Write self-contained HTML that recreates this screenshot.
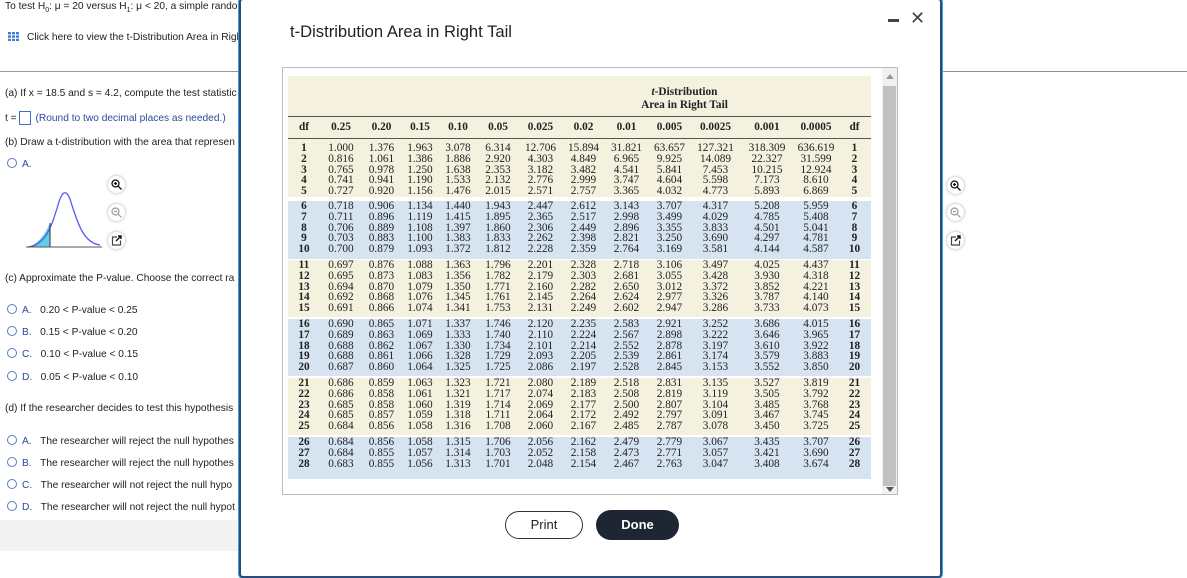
<!DOCTYPE html>
<html><head><meta charset="utf-8"><style>
*{margin:0;padding:0;box-sizing:border-box}
body{width:1187px;height:551px;overflow:hidden;background:#fff;font-family:"Liberation Sans",Arial,sans-serif;position:relative;color:#222}
.l{position:absolute;font-size:10.2px;white-space:nowrap;line-height:12px}
.rad{display:inline-block;width:10px;height:10px;border:1px solid #5b7bc7;border-radius:50%;vertical-align:-1px;margin-right:5px}
.b{color:#2a4a9a}
.mag{position:absolute;width:17px;height:17px;border-radius:50%;background:#fff;box-shadow:0 0 3px rgba(0,0,0,.35)}
.mag svg{position:absolute;left:3px;top:3px}
#modal{position:absolute;left:239px;top:-2px;width:703px;height:580px;background:#fff;border:2px solid #2b4c7a;border-radius:4px;box-shadow:0 0 0 1px #3aa0e0}
#box{position:absolute;left:282px;top:67px;width:616px;height:428px;border:1px solid #bbb;overflow:hidden;background:#fff}
.g{position:absolute;left:5px;width:583px;font-family:"Liberation Serif","Times New Roman",serif;font-size:11.3px;color:#222}
.beige{background:#f4f1df}.blue{background:#d6e4f2}
table{border-collapse:collapse;table-layout:fixed;width:583px}
td{text-align:center;line-height:10.8px;height:10.8px;padding:0;white-space:nowrap}
td:first-child,td:last-child{font-weight:bold}
</style></head><body>
<div class="l" style="left:5px;top:1px">To test H<sub style="font-size:7px">0</sub>: μ = 20 versus H<sub style="font-size:7px">1</sub>: μ &lt; 20, a simple random</div>
<div class="l" style="left:7px;top:31px"><span style="display:inline-block;width:12px;height:10px;background:#3b7fd4;vertical-align:-1px;margin-right:8px;background-image:linear-gradient(#fff 1px,transparent 1px),linear-gradient(90deg,#fff 1px,transparent 1px);background-size:4px 3.4px"></span>Click here to view the t-Distribution Area in Right</div>
<div style="position:absolute;left:0;top:71px;width:240px;height:1px;background:#999"></div>
<div style="position:absolute;left:940px;top:71px;width:247px;height:1px;background:#8a9096"></div>
<div class="l" style="left:5px;top:88px">(a) If x = 18.5 and s = 4.2, compute the test statistic</div>
<div class="l" style="left:5px;top:111px">t = <span style="display:inline-block;width:12px;height:14px;border:1px solid #3b6fd0;vertical-align:-4px;margin-right:4px"></span><span class="b">(Round to two decimal places as needed.)</span></div>
<div class="l" style="left:5px;top:137px">(b) Draw a t-distribution with the area that represen</div>
<div class="l b" style="left:7px;top:158px"><span class="rad"></span>A.</div>
<svg style="position:absolute;left:26px;top:185px" width="76" height="64"><path d="M24 38 L24 62 L2 62 C10 60 18 52 24 38 Z" fill="#5fd0e8"/><path d="M2 62 C20 60 26 40 32 20 C36 6 40 4 44 14 C52 40 58 58 74 60" fill="none" stroke="#5a5cf0" stroke-width="1.3"/><line x1="0" y1="62" x2="76" y2="62" stroke="#555"/><line x1="24" y1="38" x2="24" y2="62" stroke="#333"/></svg>
<div class="mag" style="left:108px;top:176px"><svg width="11" height="11"><circle cx="4.5" cy="4.5" r="3.5" fill="none" stroke="#111" stroke-width="1.3"/><path d="M7 7L10.5 10.5M4.5 3v3M3 4.5h3" stroke="#111" stroke-width="1.3"/></svg></div>
<div class="mag" style="left:108px;top:204px"><svg width="11" height="11"><circle cx="4.5" cy="4.5" r="3.5" fill="none" stroke="#999" stroke-width="1.2"/><path d="M7 7L10.5 10.5M3 4.5h3" stroke="#999" stroke-width="1.2"/></svg></div>
<div class="mag" style="left:108px;top:232px"><svg width="11" height="11"><path d="M6 2H1.5v8h8V5.5" fill="none" stroke="#444" stroke-width="1.2"/><path d="M5 6L10 1M7 1h3v3" fill="none" stroke="#111" stroke-width="1.4"/></svg></div>
<div class="l" style="left:5px;top:273px">(c) Approximate the P-value. Choose the correct ra</div>
<div class="l" style="left:7px;top:304px"><span class="rad"></span><span class="b">A.</span>&nbsp;&nbsp;&nbsp;0.20 &lt; P-value &lt; 0.25</div>
<div class="l" style="left:7px;top:326px"><span class="rad"></span><span class="b">B.</span>&nbsp;&nbsp;&nbsp;0.15 &lt; P-value &lt; 0.20</div>
<div class="l" style="left:7px;top:348px"><span class="rad"></span><span class="b">C.</span>&nbsp;&nbsp;&nbsp;0.10 &lt; P-value &lt; 0.15</div>
<div class="l" style="left:7px;top:371px"><span class="rad"></span><span class="b">D.</span>&nbsp;&nbsp;&nbsp;0.05 &lt; P-value &lt; 0.10</div>
<div class="l" style="left:5px;top:403px">(d) If the researcher decides to test this hypothesis</div>
<div class="l" style="left:7px;top:435px"><span class="rad"></span><span class="b">A.</span>&nbsp;&nbsp;&nbsp;The researcher will reject the null hypothes</div>
<div class="l" style="left:7px;top:457px"><span class="rad"></span><span class="b">B.</span>&nbsp;&nbsp;&nbsp;The researcher will reject the null hypothes</div>
<div class="l" style="left:7px;top:479px"><span class="rad"></span><span class="b">C.</span>&nbsp;&nbsp;&nbsp;The researcher will not reject the null hypo</div>
<div class="l" style="left:7px;top:501px"><span class="rad"></span><span class="b">D.</span>&nbsp;&nbsp;&nbsp;The researcher will not reject the null hypot</div>
<div style="position:absolute;left:0;top:520px;width:240px;height:31px;background:#f3f3f3"></div>
<div class="mag" style="left:947px;top:177px"><svg width="11" height="11"><circle cx="4.5" cy="4.5" r="3.5" fill="none" stroke="#111" stroke-width="1.3"/><path d="M7 7L10.5 10.5M4.5 3v3M3 4.5h3" stroke="#111" stroke-width="1.3"/></svg></div>
<div class="mag" style="left:947px;top:204px"><svg width="11" height="11"><circle cx="4.5" cy="4.5" r="3.5" fill="none" stroke="#999" stroke-width="1.2"/><path d="M7 7L10.5 10.5M3 4.5h3" stroke="#999" stroke-width="1.2"/></svg></div>
<div class="mag" style="left:947px;top:232px"><svg width="11" height="11"><path d="M6 2H1.5v8h8V5.5" fill="none" stroke="#444" stroke-width="1.2"/><path d="M5 6L10 1M7 1h3v3" fill="none" stroke="#111" stroke-width="1.4"/></svg></div>
<div id="modal"></div>
<div style="position:absolute;left:290px;top:22px;font-size:16.6px;color:#222">t-Distribution Area in Right Tail</div>
<div style="position:absolute;left:888px;top:19px;width:11px;height:2.5px;background:#444"></div>
<div style="position:absolute;left:910px;top:8px;font-size:18px;color:#444">✕</div>
<div id="box">
<div style="position:absolute;left:7px;top:9px;width:10px;height:7px;border:1.5px solid #3b6fd0"></div>
<div class="g beige" style="top:8px;height:68px"></div>
<div class="g" style="top:18px;text-align:center;padding-left:210px;font-weight:bold;line-height:13px"><i>t</i>-Distribution<br>Area in Right Tail</div>
<div style="position:absolute;left:5px;top:48px;width:583px;height:1px;background:#555"></div>
<div class="g beige" style="top:49px;height:21px"><table><tr style="font-weight:bold"><td style="width:32px;line-height:21px">df</td><td style="width:42px">0.25</td><td style="width:39px">0.20</td><td style="width:38px">0.15</td><td style="width:38px">0.10</td><td style="width:42px">0.05</td><td style="width:43px">0.025</td><td style="width:43px">0.02</td><td style="width:43px">0.01</td><td style="width:43px">0.005</td><td style="width:49px">0.0025</td><td style="width:54px">0.001</td><td style="width:44px">0.0005</td><td style="width:33px">df</td></tr></table></div>
<div style="position:absolute;left:5px;top:70px;width:583px;height:1px;background:#555"></div>
<div class="g beige" style="top:71px;height:59px"></div>
<div class="g" style="top:75px">
<table><colgroup><col style="width:32px"><col style="width:42px"><col style="width:39px"><col style="width:38px"><col style="width:38px"><col style="width:42px"><col style="width:43px"><col style="width:43px"><col style="width:43px"><col style="width:43px"><col style="width:49px"><col style="width:54px"><col style="width:44px"><col style="width:33px"></colgroup>
<tr><td>1</td><td>1.000</td><td>1.376</td><td>1.963</td><td>3.078</td><td>6.314</td><td>12.706</td><td>15.894</td><td>31.821</td><td>63.657</td><td>127.321</td><td>318.309</td><td>636.619</td><td>1</td></tr>
<tr><td>2</td><td>0.816</td><td>1.061</td><td>1.386</td><td>1.886</td><td>2.920</td><td>4.303</td><td>4.849</td><td>6.965</td><td>9.925</td><td>14.089</td><td>22.327</td><td>31.599</td><td>2</td></tr>
<tr><td>3</td><td>0.765</td><td>0.978</td><td>1.250</td><td>1.638</td><td>2.353</td><td>3.182</td><td>3.482</td><td>4.541</td><td>5.841</td><td>7.453</td><td>10.215</td><td>12.924</td><td>3</td></tr>
<tr><td>4</td><td>0.741</td><td>0.941</td><td>1.190</td><td>1.533</td><td>2.132</td><td>2.776</td><td>2.999</td><td>3.747</td><td>4.604</td><td>5.598</td><td>7.173</td><td>8.610</td><td>4</td></tr>
<tr><td>5</td><td>0.727</td><td>0.920</td><td>1.156</td><td>1.476</td><td>2.015</td><td>2.571</td><td>2.757</td><td>3.365</td><td>4.032</td><td>4.773</td><td>5.893</td><td>6.869</td><td>5</td></tr>
<tr><td colspan="14" style="height:4px;background:#fff;line-height:4px"></td></tr>
<tbody class="blue">
<tr><td>6</td><td>0.718</td><td>0.906</td><td>1.134</td><td>1.440</td><td>1.943</td><td>2.447</td><td>2.612</td><td>3.143</td><td>3.707</td><td>4.317</td><td>5.208</td><td>5.959</td><td>6</td></tr>
<tr><td>7</td><td>0.711</td><td>0.896</td><td>1.119</td><td>1.415</td><td>1.895</td><td>2.365</td><td>2.517</td><td>2.998</td><td>3.499</td><td>4.029</td><td>4.785</td><td>5.408</td><td>7</td></tr>
<tr><td>8</td><td>0.706</td><td>0.889</td><td>1.108</td><td>1.397</td><td>1.860</td><td>2.306</td><td>2.449</td><td>2.896</td><td>3.355</td><td>3.833</td><td>4.501</td><td>5.041</td><td>8</td></tr>
<tr><td>9</td><td>0.703</td><td>0.883</td><td>1.100</td><td>1.383</td><td>1.833</td><td>2.262</td><td>2.398</td><td>2.821</td><td>3.250</td><td>3.690</td><td>4.297</td><td>4.781</td><td>9</td></tr>
<tr><td>10</td><td>0.700</td><td>0.879</td><td>1.093</td><td>1.372</td><td>1.812</td><td>2.228</td><td>2.359</td><td>2.764</td><td>3.169</td><td>3.581</td><td>4.144</td><td>4.587</td><td>10</td></tr>
<tr><td colspan="14" style="height:4px;line-height:4px"></td></tr></tbody>
<tbody class="beige">
<tr><td colspan="14" style="height:1px;line-height:1px;background:#fff"></td></tr>
<tr><td>11</td><td>0.697</td><td>0.876</td><td>1.088</td><td>1.363</td><td>1.796</td><td>2.201</td><td>2.328</td><td>2.718</td><td>3.106</td><td>3.497</td><td>4.025</td><td>4.437</td><td>11</td></tr>
<tr><td>12</td><td>0.695</td><td>0.873</td><td>1.083</td><td>1.356</td><td>1.782</td><td>2.179</td><td>2.303</td><td>2.681</td><td>3.055</td><td>3.428</td><td>3.930</td><td>4.318</td><td>12</td></tr>
<tr><td>13</td><td>0.694</td><td>0.870</td><td>1.079</td><td>1.350</td><td>1.771</td><td>2.160</td><td>2.282</td><td>2.650</td><td>3.012</td><td>3.372</td><td>3.852</td><td>4.221</td><td>13</td></tr>
<tr><td>14</td><td>0.692</td><td>0.868</td><td>1.076</td><td>1.345</td><td>1.761</td><td>2.145</td><td>2.264</td><td>2.624</td><td>2.977</td><td>3.326</td><td>3.787</td><td>4.140</td><td>14</td></tr>
<tr><td>15</td><td>0.691</td><td>0.866</td><td>1.074</td><td>1.341</td><td>1.753</td><td>2.131</td><td>2.249</td><td>2.602</td><td>2.947</td><td>3.286</td><td>3.733</td><td>4.073</td><td>15</td></tr>
<tr><td colspan="14" style="height:3px;line-height:3px"></td></tr></tbody>
<tbody class="blue">
<tr><td colspan="14" style="height:2px;line-height:2px;background:#fff"></td></tr>
<tr><td>16</td><td>0.690</td><td>0.865</td><td>1.071</td><td>1.337</td><td>1.746</td><td>2.120</td><td>2.235</td><td>2.583</td><td>2.921</td><td>3.252</td><td>3.686</td><td>4.015</td><td>16</td></tr>
<tr><td>17</td><td>0.689</td><td>0.863</td><td>1.069</td><td>1.333</td><td>1.740</td><td>2.110</td><td>2.224</td><td>2.567</td><td>2.898</td><td>3.222</td><td>3.646</td><td>3.965</td><td>17</td></tr>
<tr><td>18</td><td>0.688</td><td>0.862</td><td>1.067</td><td>1.330</td><td>1.734</td><td>2.101</td><td>2.214</td><td>2.552</td><td>2.878</td><td>3.197</td><td>3.610</td><td>3.922</td><td>18</td></tr>
<tr><td>19</td><td>0.688</td><td>0.861</td><td>1.066</td><td>1.328</td><td>1.729</td><td>2.093</td><td>2.205</td><td>2.539</td><td>2.861</td><td>3.174</td><td>3.579</td><td>3.883</td><td>19</td></tr>
<tr><td>20</td><td>0.687</td><td>0.860</td><td>1.064</td><td>1.325</td><td>1.725</td><td>2.086</td><td>2.197</td><td>2.528</td><td>2.845</td><td>3.153</td><td>3.552</td><td>3.850</td><td>20</td></tr>
<tr><td colspan="14" style="height:3px;line-height:3px"></td></tr></tbody>
<tbody class="beige">
<tr><td colspan="14" style="height:2px;line-height:2px;background:#fff"></td></tr>
<tr><td>21</td><td>0.686</td><td>0.859</td><td>1.063</td><td>1.323</td><td>1.721</td><td>2.080</td><td>2.189</td><td>2.518</td><td>2.831</td><td>3.135</td><td>3.527</td><td>3.819</td><td>21</td></tr>
<tr><td>22</td><td>0.686</td><td>0.858</td><td>1.061</td><td>1.321</td><td>1.717</td><td>2.074</td><td>2.183</td><td>2.508</td><td>2.819</td><td>3.119</td><td>3.505</td><td>3.792</td><td>22</td></tr>
<tr><td>23</td><td>0.685</td><td>0.858</td><td>1.060</td><td>1.319</td><td>1.714</td><td>2.069</td><td>2.177</td><td>2.500</td><td>2.807</td><td>3.104</td><td>3.485</td><td>3.768</td><td>23</td></tr>
<tr><td>24</td><td>0.685</td><td>0.857</td><td>1.059</td><td>1.318</td><td>1.711</td><td>2.064</td><td>2.172</td><td>2.492</td><td>2.797</td><td>3.091</td><td>3.467</td><td>3.745</td><td>24</td></tr>
<tr><td>25</td><td>0.684</td><td>0.856</td><td>1.058</td><td>1.316</td><td>1.708</td><td>2.060</td><td>2.167</td><td>2.485</td><td>2.787</td><td>3.078</td><td>3.450</td><td>3.725</td><td>25</td></tr>
<tr><td colspan="14" style="height:3px;line-height:3px"></td></tr></tbody>
<tbody class="blue">
<tr><td colspan="14" style="height:2px;line-height:2px;background:#fff"></td></tr>
<tr><td>26</td><td>0.684</td><td>0.856</td><td>1.058</td><td>1.315</td><td>1.706</td><td>2.056</td><td>2.162</td><td>2.479</td><td>2.779</td><td>3.067</td><td>3.435</td><td>3.707</td><td>26</td></tr>
<tr><td>27</td><td>0.684</td><td>0.855</td><td>1.057</td><td>1.314</td><td>1.703</td><td>2.052</td><td>2.158</td><td>2.473</td><td>2.771</td><td>3.057</td><td>3.421</td><td>3.690</td><td>27</td></tr>
<tr><td>28</td><td>0.683</td><td>0.855</td><td>1.056</td><td>1.313</td><td>1.701</td><td>2.048</td><td>2.154</td><td>2.467</td><td>2.763</td><td>3.047</td><td>3.408</td><td>3.674</td><td>28</td></tr>
<tr><td colspan="14" style="height:10px"></td></tr></tbody>
</table></div>
<div style="position:absolute;left:599px;top:0;width:16px;height:428px;background:#f1f1f1"></div>
<div style="position:absolute;left:600px;top:18px;width:13px;height:400px;background:#c1c1c1"></div>
<div style="position:absolute;left:603px;top:6px;width:0;height:0;border-left:4px solid transparent;border-right:4px solid transparent;border-bottom:5px solid #999"></div>
<div style="position:absolute;left:603px;top:419px;width:0;height:0;border-left:4px solid transparent;border-right:4px solid transparent;border-top:5px solid #555"></div>
</div>
<div style="position:absolute;left:505px;top:511px;width:78px;height:28px;border:1.5px solid #333;border-radius:14px;text-align:center;line-height:25px;font-size:13px;color:#222">Print</div>
<div style="position:absolute;left:596px;top:510px;width:83px;height:30px;background:#1e2533;border-radius:15px;text-align:center;line-height:30px;font-size:13px;color:#fff;font-weight:bold">Done</div>
</body></html>
